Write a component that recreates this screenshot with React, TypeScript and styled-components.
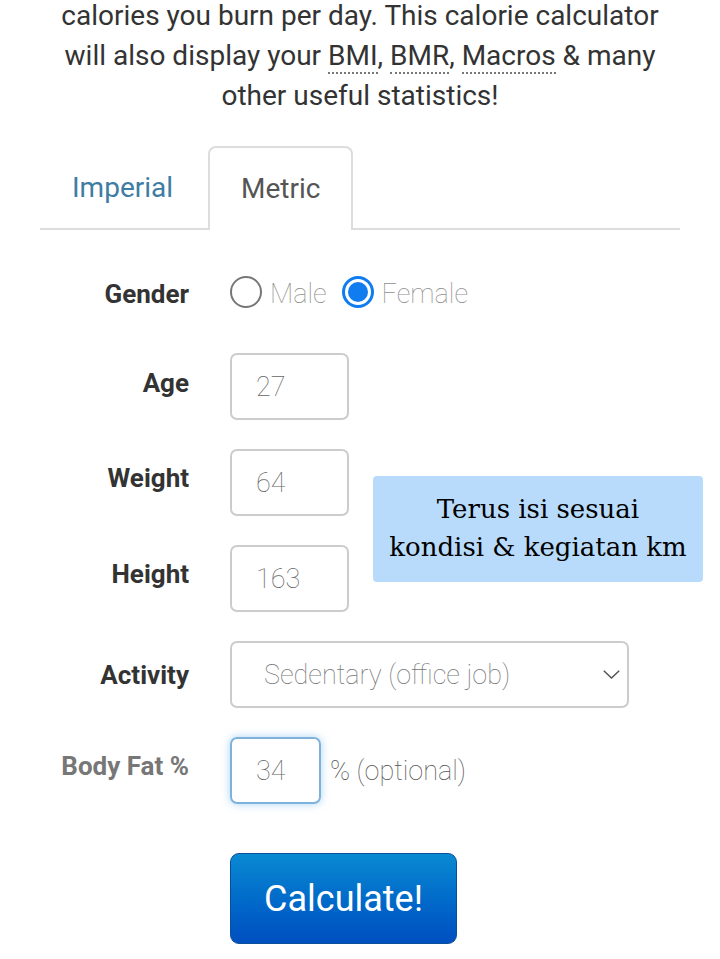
import React from "react";
import styled, { createGlobalStyle } from "styled-components";

const Global = createGlobalStyle`
  html, body { margin: 0; padding: 0; background: #fff; }
  body { font-family: Roboto, "Liberation Sans", sans-serif; color: #333; overflow: hidden; }
  * { box-sizing: border-box; }
`;

const Page = styled.div`
  position: relative;
  width: 720px;
  height: 959px;
  overflow: hidden;
`;

const Intro = styled.p`
  margin: -4px 0 0;
  padding: 0 30px;
  font-size: 28px;
  line-height: 40px;
  text-align: center;
  color: #333;
`;

const Abbr = styled.span`
  border-bottom: 2px dotted #777;
`;

const TabNav = styled.div`
  display: flex;
  align-items: flex-end;
  gap: 3px;
  margin: 30px 40px 0;
  height: 84px;
  border-bottom: 2px solid #ddd;
`;

const Tab = styled.div<{ $active?: boolean }>`
  height: ${(p) => (p.$active ? "84px" : "82px")};
  padding: 0 ${(p) => (p.$active ? "31px" : "32px")};
  display: flex;
  align-items: center;
  font-size: 28px;
  color: ${(p) => (p.$active ? "#555" : "#3f7ca3")};
  background: #fff;
  border: ${(p) => (p.$active ? "2px solid #ddd" : "none")};
  border-bottom: none;
  border-radius: 8px 8px 0 0;
  margin-bottom: ${(p) => (p.$active ? "-2px" : "0")};
  padding-bottom: ${(p) => (p.$active ? "2px" : "0")};
`;

const Form = styled.div`
  display: flex;
  flex-direction: column;
  gap: 29px;
  margin-top: 27px;
`;

const Row = styled.div`
  display: grid;
  grid-template-columns: 189px 1fr;
  column-gap: 41px;
  align-items: start;
  min-height: 67px;
`;

const Label = styled.div<{ $pt: number; $muted?: boolean }>`
  padding-top: ${(p) => p.$pt}px;
  text-align: right;
  font-size: 26px;
  line-height: 30px;
  font-weight: 700;
  color: ${(p) => (p.$muted ? "#777" : "#333")};
`;

const RadioGroup = styled.div`
  display: flex;
  align-items: center;
  margin-top: 16px;
`;

const RadioOption = styled.label`
  display: flex;
  align-items: center;
  gap: 8px;
  margin-right: 15px;
  font-size: 27px;
  font-weight: 100;
  color: #8f8f8f;
  line-height: 32px;
  & > span:last-child {
    padding-top: 5px;
  }
`;

const RadioCircle = styled.span<{ $checked?: boolean }>`
  width: 32px;
  height: 32px;
  border-radius: 50%;
  border: ${(p) => (p.$checked ? "3px solid #0f7cf0" : "2px solid #777")};
  display: flex;
  align-items: center;
  justify-content: center;
  background: #fff;
  &::after {
    content: "";
    display: ${(p) => (p.$checked ? "block" : "none")};
    width: 20px;
    height: 20px;
    border-radius: 50%;
    background: #0f7cf0;
  }
`;

const Input = styled.div<{ $w: number; $focus?: boolean }>`
  width: ${(p) => p.$w}px;
  height: 67px;
  border: 2px solid ${(p) => (p.$focus ? "#7eb2dc" : "#ccc")};
  border-radius: 7px;
  padding-left: 24px;
  display: flex;
  align-items: center;
  font-size: 27px;
  font-weight: 100;
  color: #666;
  box-shadow: ${(p) => (p.$focus ? "0 0 9px rgba(102,175,233,0.55)" : "none")};
`;

const InlineControls = styled.div`
  display: flex;
  align-items: center;
  gap: 9px;
`;

const Suffix = styled.span`
  font-size: 27px;
  font-weight: 100;
  color: #555;
`;

const Select = styled.div`
  width: 399px;
  height: 67px;
  border: 2px solid #ccc;
  border-radius: 7px;
  padding: 0 7px 0 32px;
  display: flex;
  align-items: center;
  justify-content: space-between;
  font-size: 27px;
  font-weight: 100;
  color: #777;
`;

const ButtonRow = styled.div`
  padding-left: 230px;
  margin-top: 49px;
`;

const Button = styled.button`
  width: 227px;
  height: 91px;
  border-radius: 9px;
  border: 1px solid #0a4f98;
  background: linear-gradient(to bottom, #0a8ad2 0%, #0068c9 55%, #004fc0 100%);
  color: #fff;
  font-family: Roboto, "Liberation Sans", sans-serif;
  font-size: 36px;
  font-weight: 400;
  padding: 0;
  cursor: pointer;
`;

const Note = styled.div`
  position: absolute;
  left: 373px;
  top: 476px;
  width: 330px;
  height: 106px;
  background: #b8dbfb;
  border-radius: 4px;
  display: flex;
  align-items: center;
  justify-content: center;
  text-align: center;
  font-family: "DejaVu Serif", "Liberation Serif", serif;
  font-size: 26px;
  line-height: 38px;
  color: #000;
  padding-bottom: 2px;
`;

const Chevron = () => (
  <svg width="17" height="9" viewBox="0 0 17 9" fill="none">
    <path d="M0.8 0.8 L8.5 8 L16.2 0.8" stroke="#555" strokeWidth="1.5" />
  </svg>
);

export default function App() {
  return (
    <Page>
      <Global />
      <Intro>
        calories you burn per day. This calorie calculator
        <br />
        will also display your <Abbr>BMI</Abbr>, <Abbr>BMR</Abbr>,{" "}
        <Abbr>Macros</Abbr> &amp; many
        <br />
        other useful statistics!
      </Intro>
      <TabNav>
        <Tab>Imperial</Tab>
        <Tab $active>Metric</Tab>
      </TabNav>
      <Form>
        <Row>
          <Label $pt={22}>Gender</Label>
          <RadioGroup>
            <RadioOption>
              <RadioCircle />
              <span>Male</span>
            </RadioOption>
            <RadioOption>
              <RadioCircle $checked />
              <span>Female</span>
            </RadioOption>
          </RadioGroup>
        </Row>
        <Row>
          <Label $pt={15}>Age</Label>
          <Input $w={119}>27</Input>
        </Row>
        <Row>
          <Label $pt={14}>Weight</Label>
          <Input $w={119}>64</Input>
        </Row>
        <Row>
          <Label $pt={14}>Height</Label>
          <Input $w={119}>163</Input>
        </Row>
        <Row>
          <Label $pt={19}>Activity</Label>
          <Select>
            <span>Sedentary (office job)</span>
            <Chevron />
          </Select>
        </Row>
        <Row>
          <Label $pt={14} $muted>
            Body Fat %
          </Label>
          <InlineControls>
            <Input $w={91} $focus>
              34
            </Input>
            <Suffix>% (optional)</Suffix>
          </InlineControls>
        </Row>
      </Form>
      <ButtonRow>
        <Button>Calculate!</Button>
      </ButtonRow>
      <Note>
        Terus isi sesuai
        <br />
        kondisi &amp; kegiatan km
      </Note>
    </Page>
  );
}
